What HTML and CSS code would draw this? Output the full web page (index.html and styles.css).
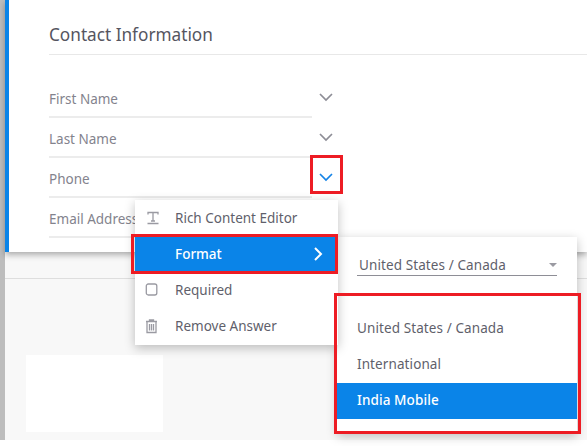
FILE: index.html
```html
<!DOCTYPE html>
<html lang="en">
<head>
<meta charset="utf-8">
<title>Contact Information</title>
<link rel="stylesheet" href="styles.css">
</head>
<body>
<main class="page">
  <section class="card">
    <h2 class="title">Contact Information</h2>
    <div class="rows">
      <div class="row"><span class="field">First Name</span><svg class="chev" viewBox="0 0 14 8"><path d="M1 1l6 6 6-6"/></svg></div>
      <div class="row"><span class="field">Last Name</span><svg class="chev" viewBox="0 0 14 8"><path d="M1 1l6 6 6-6"/></svg></div>
      <div class="row"><span class="field">Phone</span><svg class="chev active" viewBox="0 0 14 8"><path d="M1 1l6 6 6-6"/></svg></div>
      <div class="row"><span class="field">Email Address</span></div>
    </div>
  </section>
  <div class="lower">
    <div class="divider"></div>
    <div class="blank"></div>
  </div>
</main>

<div class="mark mark-chev"></div>

<div class="menu">
  <div class="item">
    <svg class="ico" viewBox="0 0 14 14"><path d="M3 3.500V1.500h10v2M8 1.500V10M6 10h4M2.500 12.500h11"/></svg>
    <span>Rich Content Editor</span>
  </div>
  <div class="item selected">
    <span class="ico"></span>
    <span class="grow">Format</span>
    <svg class="next" viewBox="0 0 9 14"><path d="M1 1l6 6-6 6"/></svg>
  </div>
  <div class="item">
    <svg class="ico" viewBox="0 0 14 14"><rect x="1.300" y="1" width="10.500" height="11" rx="2"/></svg>
    <span>Required</span>
  </div>
  <div class="item">
    <svg class="ico" viewBox="0 0 14 14"><path d="M1 2.500h11M4.500 2.500V1h4v1.500M2 2.500V13.500h9V2.500M4.500 5V11.500M6.500 5V11.500M8.500 5V11.500"/></svg>
    <span>Remove Answer</span>
  </div>
</div>
<div class="mark mark-format"></div>

<div class="panel">
  <div class="select"><span>United States / Canada</span><i class="caret"></i></div>
  <ul class="options">
    <li>United States / Canada</li>
    <li>International</li>
    <li class="selected">India Mobile</li>
  </ul>
</div>
<div class="mark mark-list"></div>
</body>
</html>
```

FILE: styles.css
```css
* { box-sizing: border-box; }
html, body { margin: 0; padding: 0; background: #fff; }
body {
  width: 587px;
  height: 446px;
  overflow: hidden;
  position: relative;
  font-family: "Noto Sans", "Open Sans", sans-serif;
  font-size: 13.5px;
  color: #5a5a66;
}
.page {
  height: 440px;
  border-left: 5px solid #bdbdbd;
  background: #f8f8f8;
  display: flex;
  flex-direction: column;
}
.card {
  height: 252px;
  background: #fff;
  border-left: 4px solid #0a84e8;
  padding: 0 0 0 40px;
  box-shadow: 0 3px 6px rgba(0, 0, 0, .3);
}
.title {
  margin: 0;
  height: 55px;
  padding-top: 22px;
  border-bottom: 1px solid #e8e8e8;
  font-size: 17.200px;
  line-height: 26px;
  font-weight: 400;
  color: #55555f;
}
.rows { padding-top: 23px; }
.row {
  width: 284px;
  height: 40px;
  display: flex;
  align-items: center;
  justify-content: space-between;
  position: relative;
}
.field {
  width: 263px;
  height: 40px;
  line-height: 43px;
  border-bottom: 2px solid #ececec;
  color: #83838d;
}
.chev { width: 14px; height: 8px; fill: none; stroke: #8d8d96; stroke-width: 1.700; margin-top: -2px; overflow: visible; }
.chev.active { stroke: #1583e6; }
.lower { flex: 1; padding-top: 26px; }
.divider { height: 1px; background: #dedede; }
.blank { width: 137px; height: 77px; margin: 76px 0 0 21px; background: #fff; }

.menu {
  position: absolute;
  left: 135px;
  top: 200px;
  width: 203px;
  height: 145px;
  background: #fff;
  box-shadow: 0 3px 10px rgba(0, 0, 0, .25);
  z-index: 2;
}
.item {
  height: 36px;
  display: flex;
  align-items: center;
  padding: 0 15px 0 10px;
  color: #5f5f6b;
}
.item.selected { background: #0a84e8; color: #fff; font-weight: 500; }
.ico { width: 14px; height: 14px; margin-right: 16px; fill: none; stroke: #9a9aa2; stroke-width: 1.300; flex: none; overflow: visible; }
.grow { flex: 1; }
.next { width: 9px; height: 14px; fill: none; stroke: #fff; stroke-width: 2; }

.panel {
  position: absolute;
  left: 337px;
  top: 237px;
  width: 240px;
  height: 196px;
  background: #fff;
  box-shadow: 0 3px 10px rgba(0, 0, 0, .25);
  z-index: 1;
  padding-top: 18px;
  letter-spacing: .1px;
}
.select {
  width: 200px;
  height: 21px;
  margin-left: 20px;
  padding-left: 2px;
  border-bottom: 1px solid #8e8e96;
  display: flex;
  align-items: center;
  justify-content: space-between;
  line-height: 20px;
  color: #5f5f6b;
}
.caret {
  width: 0;
  height: 0;
  border-left: 4px solid transparent;
  border-right: 4px solid transparent;
  border-top: 4px solid #9a9aa2;
}
.options { list-style: none; margin: 35px 0 0; padding: 0; }
.options li { height: 36px; line-height: 34px; padding-left: 20px; color: #5f5f6b; }
.options li.selected { background: #0a84e8; color: #fff; font-weight: 500; line-height: 35px; }

.mark { position: absolute; border: 3px solid #ed1c24; z-index: 3; }
.mark-chev { left: 310px; top: 155px; width: 33px; height: 39px; }
.mark-format { left: 131px; top: 234px; width: 207px; height: 40px; }
.mark-list { left: 334px; top: 293px; width: 247px; height: 141px; }
```
